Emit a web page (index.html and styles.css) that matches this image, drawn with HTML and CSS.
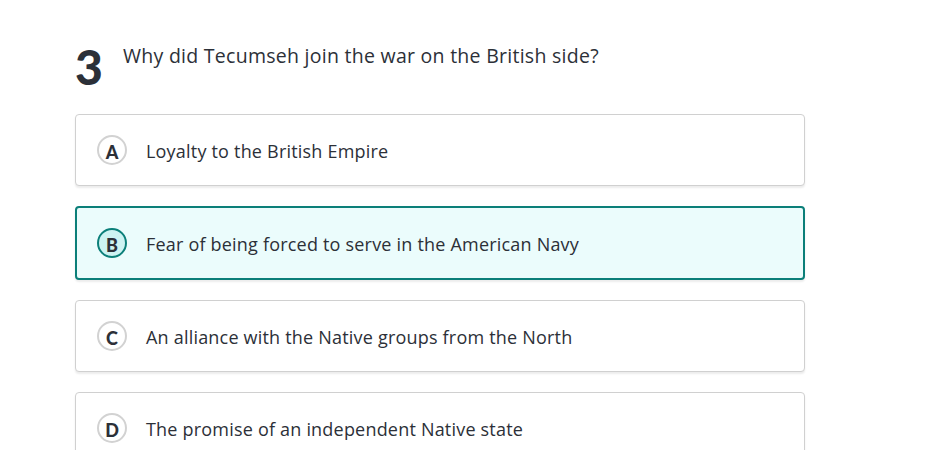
FILE: index.html
```html
<!DOCTYPE html>
<html>
<head>
<meta charset="utf-8">
<link rel="stylesheet" href="styles.css">
</head>
<body>
<div class="quiz">
  <div class="question">
    <div class="num">3</div>
    <div class="qtext">Why did Tecumseh join the war on the British side?</div>
  </div>
  <div class="options">
    <div class="option"><span class="letter">A</span><span class="label">Loyalty to the British Empire</span></div>
    <div class="option selected"><span class="letter">B</span><span class="label">Fear of being forced to serve in the American Navy</span></div>
    <div class="option"><span class="letter">C</span><span class="label">An alliance with the Native groups from the North</span></div>
    <div class="option"><span class="letter">D</span><span class="label">The promise of an independent Native state</span></div>
  </div>
</div>
</body>
</html>
```
FILE: styles.css
```css
html, body {
  margin: 0;
  padding: 0;
  background: #fff;
}
body {
  font-family: "Open Sans", Lato, sans-serif;
  color: #2c3038;
}
.quiz {
  padding: 42px 0 0 75px;
  width: 730px;
}
.question {
  display: flex;
  align-items: flex-start;
  gap: 21px;
  height: 72px;
}
.num {
  font-family: Lato, sans-serif;
  font-size: 48px;
  font-weight: 900;
  line-height: 50px;
  margin-top: 0;
  width: 27px;
}
.qtext {
  font-size: 19.5px;
  letter-spacing: 0.27px;
  line-height: 28px;
  margin-top: 0;
}
.options {
  display: flex;
  flex-direction: column;
  gap: 20px;
}
.option {
  display: flex;
  align-items: center;
  height: 70px;
  border: 1px solid #d0d0d0;
  border-radius: 4px;
  box-shadow: 0 2px 2px rgba(0,0,0,0.08);
  padding: 0 20px;
  background: #fff;
}
.option.selected {
  height: 70px;
  border: 2px solid #0b7f79;
  background: #ebfcfc;
  padding: 0 19px;
}
.letter {
  width: 26px;
  border: 2px solid #d2d2d2;
  border-radius: 50%;
  display: flex;
  align-items: center;
  justify-content: center;
  font-family: Lato, sans-serif;
  font-weight: 900;
  font-size: 18px;
  line-height: 1;
  padding-top: 4px;
  box-sizing: content-box;
  height: 22px;
  margin-right: 19px;
  margin-left: 1px;
}
.selected .letter {
  border-color: #0b7f79;
  background: #cdf3f2;
}
.label {
  font-size: 18px;
  letter-spacing: 0.2px;
  padding-top: 1px;
}
```
